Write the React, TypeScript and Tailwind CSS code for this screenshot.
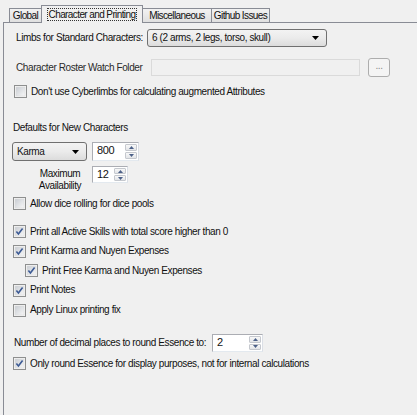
import React from 'react';

const Check: React.FC<{ checked?: boolean }> = ({ checked }) => (
  <svg width="13" height="13" viewBox="0 0 13 13" className="shrink-0">
    <defs>
      <linearGradient id="cbg" x1="0" y1="0" x2="1" y2="1">
        <stop offset="0" stopColor="#c9cdd3" />
        <stop offset="1" stopColor="#f7f7f7" />
      </linearGradient>
    </defs>
    <rect x="0.5" y="0.5" width="12" height="12" fill="#f4f4f4" stroke="#8e8f8f" />
    <rect x="2" y="2" width="9" height="9" fill="url(#cbg)" stroke="#d8d8d8" strokeWidth="0.5" />
    {checked && (
      <path d="M3.4 6.6 L5.4 8.9 L9.6 3.4" fill="none" stroke="#3c5a94" strokeWidth="1.6" />
    )}
  </svg>
);

const CheckRow: React.FC<{ label: string; checked?: boolean; indent?: boolean; className?: string }> = ({
  label,
  checked,
  indent,
  className = '',
}) => (
  <div className={`flex items-center gap-[4px] ${indent ? 'ml-[21px]' : 'ml-[9px]'} ${className}`}>
    <Check checked={checked} />
    <span>{label}</span>
  </div>
);

const Combo: React.FC<{ value: string; className?: string }> = ({ value, className = '' }) => (
  <div
    className={`flex items-center justify-between border border-[#707070] rounded-[3px] bg-gradient-to-b from-[#f3f3f3] via-[#ebebeb] to-[#dcdcdc] pl-[4px] pr-[7px] ${className}`}
  >
    <span className="whitespace-nowrap">{value}</span>
    <svg width="7" height="4" viewBox="0 0 7 4">
      <path d="M0 0 H7 L3.5 4 Z" fill="#000" />
    </svg>
  </div>
);

const Spin: React.FC<{ value: string; className?: string }> = ({ value, className = '' }) => (
  <div className={`flex border border-[#abadb3] border-b-[#e3e9ef] border-r-[#dbdfe6] bg-white ${className}`}>
    <span className="flex-1 pl-[4px] pt-[1px] text-[11px]">{value}</span>
    <div className="w-[14px] flex flex-col p-[1px] gap-[1px]">
      <div className="flex-1 flex items-center justify-center border border-[#c5c8ce] rounded-[1px] bg-gradient-to-b from-[#f8f8f8] to-[#e3e5e8]">
        <svg width="5" height="3" viewBox="0 0 5 3">
          <path d="M0 3 L2.5 0 L5 3 Z" fill="#4c6088" />
        </svg>
      </div>
      <div className="flex-1 flex items-center justify-center border border-[#c5c8ce] rounded-[1px] bg-gradient-to-b from-[#f8f8f8] to-[#e3e5e8]">
        <svg width="5" height="3" viewBox="0 0 5 3">
          <path d="M0 0 L5 0 L2.5 3 Z" fill="#4c6088" />
        </svg>
      </div>
    </div>
  </div>
);

const tabs = [
  { label: 'Global', w: 'w-[33px]' },
  { label: 'Character and Printing', w: 'w-[102px]' },
  { label: 'Miscellaneous', w: 'w-[70px]' },
  { label: 'Github Issues', w: 'w-[59px]' },
];

export default function App() {
  return (
    <div className="w-[417px] h-[415px] overflow-hidden bg-[#f0f0f0] text-[10px] tracking-[-0.4px] text-[#111] font-['Liberation_Sans',Arial,sans-serif] leading-[12px]">
      {/* tab strip */}
      <div className="h-[22px] flex items-end pl-[9px] tracking-[-0.6px]">
        {tabs.map((t, i) =>
          i === 1 ? (
            <div
              key={t.label}
              className={`relative z-10 -mb-[1px] -ml-[1px] h-[18px] ${t.w} flex items-center justify-center bg-[#f0f0f0] border border-b-0 border-[#898c95]`}
            >
              <span className="border border-dotted border-[#333] px-[1px] leading-[11px] whitespace-nowrap">
                {t.label}
              </span>
            </div>
          ) : (
            <div
              key={t.label}
              className={`h-[14px] ${t.w} flex items-center justify-center whitespace-nowrap border border-b-0 border-[#898c95] bg-gradient-to-b from-[#f2f2f2] to-[#e0e0e0] ${
                i === 0 ? '' : '-ml-[1px]'
              }`}
            >
              {t.label}
            </div>
          ),
        )}
      </div>

      {/* panel */}
      <div className="ml-[3px] h-[393px] border-l border-t border-[#898c95] flex flex-col">
        <div className="mt-[6px] h-[18px] flex items-center">
          <span className="ml-[12px] w-[131px]">Limbs for Standard Characters:</span>
          <Combo value="6 (2 arms, 2 legs, torso, skull)" className="w-[180px] h-[18px]" />
        </div>

        <div className="mt-[11px] h-[19px] flex items-center">
          <span className="ml-[12px] w-[135px] text-[#2a2a2a]">Character Roster Watch Folder</span>
          <div className="w-[209px] h-[17px] border border-[#dadada] bg-[#f0f0f0]" />
          <div className="ml-[8px] w-[22px] h-[19px] border border-[#adadad] rounded-[3px] bg-[#f4f4f4] flex items-center justify-center text-[#8a8a8a] leading-none pb-[3px]">
            ...
          </div>
        </div>

        <CheckRow className="mt-[8px] h-[13px] ml-[10px]" label="Don't use Cyberlimbs for calculating augmented Attributes" />

        <div className="mt-[24px] ml-[9px] h-[12px]">Defaults for New Characters</div>

        <div className="mt-[8px] h-[19px] flex items-center">
          <Combo value="Karma" className="ml-[8px] w-[75px] h-[19px]" />
          <Spin value="800" className="ml-[5px] w-[47px] h-[19px]" />
        </div>

        <div className="mt-[5px] h-[26px] flex items-start">
          <div className="ml-[28px] w-[56px] mt-[2px] text-center">
            Maximum
            <br />
            Availability
          </div>
          <Spin value="12" className="ml-[4px] w-[36px] h-[17px]" />
        </div>

        <CheckRow className="mt-[5px] h-[13px]" label="Allow dice rolling for dice pools" />

        <div className="mt-[12px] flex flex-col">
          <CheckRow className="h-[19px]" checked label="Print all Active Skills with total score higher than 0" />
          <CheckRow className="h-[20px]" checked label="Print Karma and Nuyen Expenses" />
          <CheckRow className="h-[19px]" checked indent label="Print Free Karma and Nuyen Expenses" />
          <CheckRow className="h-[20px]" checked label="Print Notes" />
          <CheckRow className="h-[20px]" label="Apply Linux printing fix" />
        </div>

        <div className="mt-[14px] h-[18px] flex items-center">
          <span className="ml-[10px] w-[198px]">Number of decimal places to round Essence to:</span>
          <Spin value="2" className="w-[51px] h-[18px]" />
        </div>

        <CheckRow
          className="mt-[5px] h-[13px]"
          checked
          label="Only round Essence for display purposes, not for internal calculations"
        />
      </div>
    </div>
  );
}
